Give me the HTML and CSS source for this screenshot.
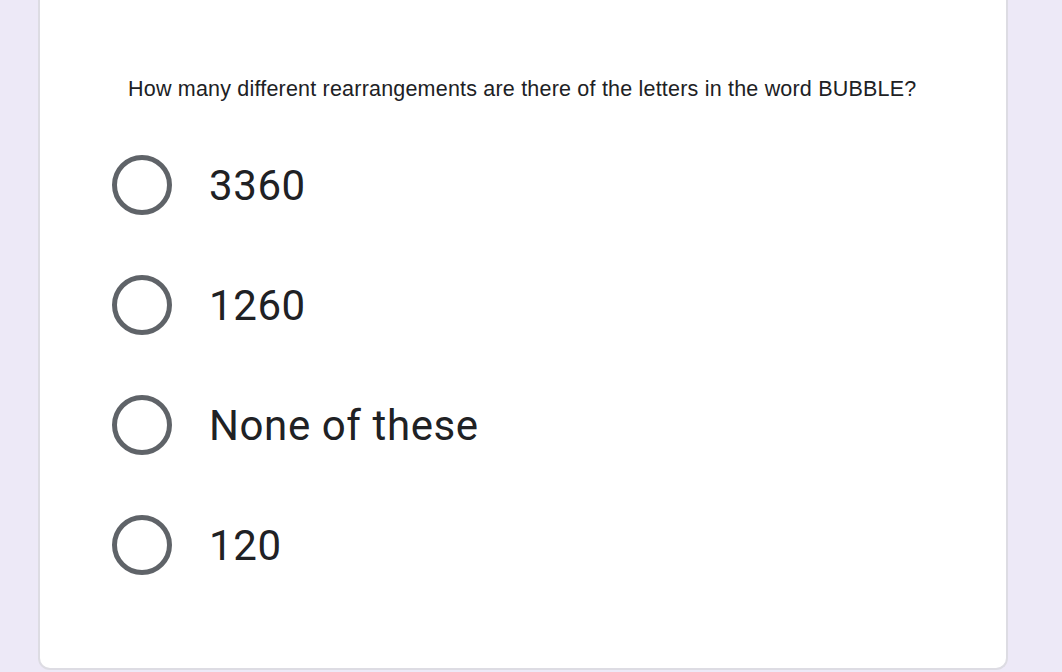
FILE: index.html
```html
<!DOCTYPE html>
<html lang="en">
<head>
<meta charset="utf-8">
<title>Quiz</title>
<link rel="stylesheet" href="styles.css">
</head>
<body>
<main class="card">
  <p class="question">How many different rearrangements are there of the letters in the word BUBBLE?</p>
  <ul class="options">
    <li class="option"><span class="radio"></span><span class="label">3360</span></li>
    <li class="option"><span class="radio"></span><span class="label">1260</span></li>
    <li class="option"><span class="radio"></span><span class="label">None of these</span></li>
    <li class="option"><span class="radio"></span><span class="label">120</span></li>
  </ul>
</main>
</body>
</html>
```
FILE: styles.css
```css
html, body {
  margin: 0;
  padding: 0;
  background: #ede9f7;
  height: 672px;
  overflow: hidden;
}
.card {
  box-sizing: border-box;
  margin-left: 38px;
  width: 970px;
  height: 670px;
  background: #ffffff;
  border: 2px solid #dddce3;
  border-top: none;
  border-radius: 0 0 12px 12px;
  padding: 77px 0 0 0;
}
.question {
  margin: 0 0 0 88px;
  font-family: "Liberation Sans", Arial, sans-serif;
  font-size: 21.5px;
  letter-spacing: 0.2px;
  line-height: 24px;
  color: #202124;
}
.options {
  list-style: none;
  margin: 24px 0 0 0;
  padding: 0 0 0 72px;
}
.option {
  display: flex;
  align-items: center;
  height: 120px;
}
.radio {
  box-sizing: border-box;
  width: 60px;
  height: 60px;
  border: 5.5px solid #5f6368;
  border-radius: 50%;
  flex: none;
}
.label {
  margin-left: 37px;
  font-family: Roboto, "Noto Sans", sans-serif;
  font-size: 42px;
  letter-spacing: 0.6px;
  color: #202124;
}
```
